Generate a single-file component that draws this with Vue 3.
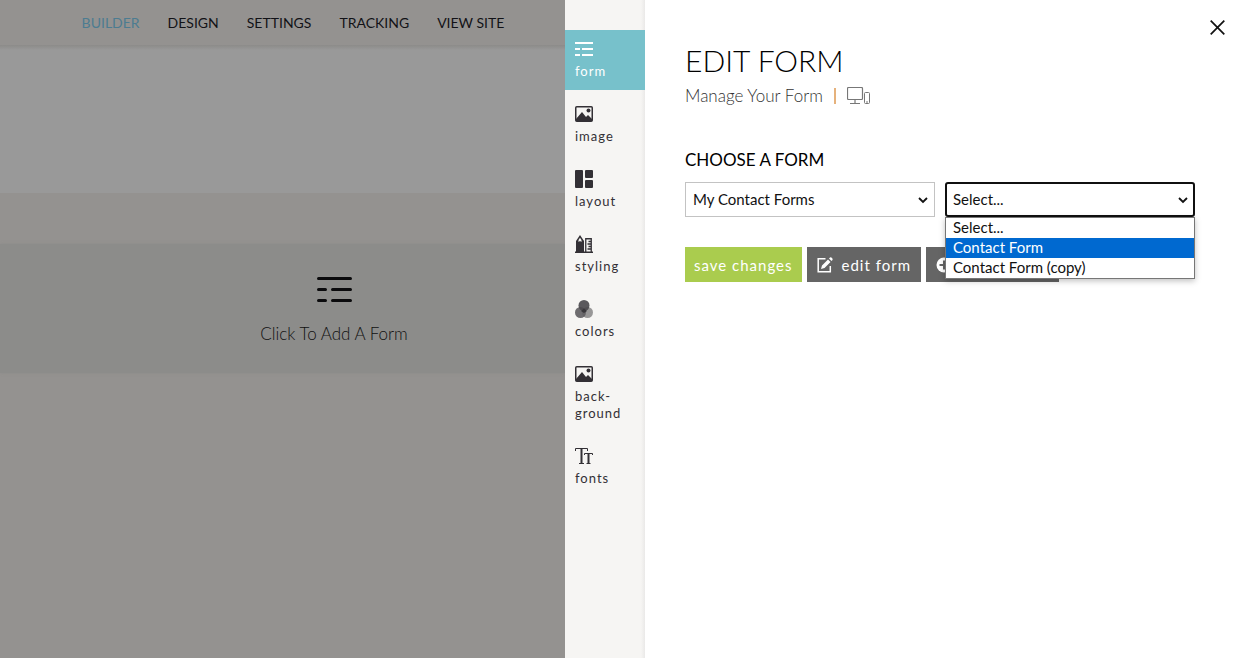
<script setup>
import { ref } from 'vue'

const navLinks = ['BUILDER', 'DESIGN', 'SETTINGS', 'TRACKING', 'VIEW SITE']
const tools = [
  { icon: 'form', lines: ['form'] },
  { icon: 'image', lines: ['image'] },
  { icon: 'layout', lines: ['layout'] },
  { icon: 'styling', lines: ['styling'] },
  { icon: 'colors', lines: ['colors'] },
  { icon: 'image', lines: ['back-', 'ground'] },
  { icon: 'fonts', lines: ['fonts'] }
]
const formOptions = ['Select...', 'Contact Form', 'Contact Form (copy)']

const activeTool = ref(0)
const group = ref('My Contact Forms')
const chosen = ref('Select...')
const highlighted = ref(1)
</script>

<template>
  <div class="app">
    <main class="stage">
      <nav class="topnav">
        <a v-for="(link, i) in navLinks" :key="link" href="#" :class="{ current: i === 0 }">{{ link }}</a>
      </nav>
      <div class="blank"></div>
      <div class="strip"></div>
      <button class="dropzone" type="button">
        <svg width="35" height="28" viewBox="0 0 35 28" fill="none" stroke="#0b0b0d" stroke-width="3" stroke-linecap="round">
          <path d="M1.500 3.500H33.500M1.500 14.500H8.500M15.500 14.500H33.500M1.500 25.500H8.500M15.500 25.500H33.500" />
        </svg>
        <span>Click To Add A Form</span>
      </button>
    </main>

    <aside class="rail">
      <button
        v-for="(tool, i) in tools"
        :key="i"
        type="button"
        class="tool"
        :class="{ active: i === activeTool }"
        @click="activeTool = i"
      >
        <svg v-if="tool.icon === 'form'" width="18" height="18" viewBox="0 0 18 18" fill="none" stroke="#fff" stroke-width="2">
          <path d="M0 3H18M0 9H5M7 9H18M0 15H5M7 15H18" />
        </svg>
        <svg v-else-if="tool.icon === 'image'" width="18" height="18" viewBox="0 0 18 18">
          <rect x=".75" y="1.750" width="16.500" height="14.500" rx="1" fill="none" stroke="#333035" stroke-width="1.500" />
          <path d="M1 14L7 7L11 12L13 10L17 14V16H1Z" fill="#333035" />
          <circle cx="13.500" cy="5.500" r="2" fill="#333035" />
        </svg>
        <svg v-else-if="tool.icon === 'layout'" width="18" height="18" viewBox="0 0 18 18" fill="#333035">
          <rect width="8" height="18" rx="1" />
          <rect x="10" width="8" height="8" rx="1" />
          <rect x="10" y="10" width="8" height="8" rx="1" />
        </svg>
        <svg v-else-if="tool.icon === 'styling'" width="18" height="18" viewBox="0 0 18 18" fill="#333035">
          <path d="M0 16.500H18V18H0ZM1 17V6L5 0L9 6V17Z" />
          <path d="M3.500 5L5 2.800L6.500 5V7L5 6L3.500 7Z" fill="#f6f5f3" />
          <path d="M10.750 17V3.750H16.250V17M13.500 6.500H16M12.500 9H16M13.500 11.500H16M12.500 14H16" fill="none" stroke="#333035" stroke-width="1.300" />
        </svg>
        <svg v-else-if="tool.icon === 'colors'" width="18" height="18" viewBox="0 0 18 18">
          <circle cx="12.500" cy="12.500" r="5.500" fill="#989797" />
          <circle cx="5.500" cy="12.500" r="5.500" fill="#5f5d60" fill-opacity=".9" />
          <circle cx="9" cy="5.500" r="5.500" fill="#49474b" fill-opacity=".9" />
          <path d="M9 8.500L12 11L9 13L6 11Z" fill="#39373b" />
        </svg>
        <svg v-else width="18" height="18" viewBox="0 0 18 18" fill="none" stroke="#333035">
          <path d="M.5 4V1.500H12.500V4M9.500 8V6.500H17.500V8" />
          <path d="M6.500 1.500V16M13.500 6.500V16" stroke-width="2" />
          <path d="M4 16.500H9M11.500 16.500H15.500" />
        </svg>
        <span v-for="line in tool.lines" :key="line" class="tool-line">{{ line }}</span>
      </button>
    </aside>

    <section class="panel">
      <button class="close" type="button" aria-label="Close">
        <svg width="15" height="15" viewBox="0 0 15 15" fill="none" stroke="#111" stroke-width="1.700">
          <path d="M.7 .7L14.300 14.300M14.300 .7L.7 14.300" />
        </svg>
      </button>

      <h1>EDIT FORM</h1>
      <div class="subtitle">
        <span>Manage Your Form</span>
        <span class="divider"></span>
        <svg width="24" height="18" viewBox="0 0 24 18" fill="none" stroke="#777">
          <rect x=".5" y=".5" width="15" height="12" rx="1" stroke-width="1.200" />
          <path d="M8 12.500V16M3 16.500H13" stroke-width="1.200" />
          <rect x="17.500" y="5.500" width="5" height="11" rx="1" />
          <path d="M19 15H21" />
        </svg>
      </div>

      <h2 id="choose">CHOOSE A FORM</h2>
      <div class="fields">
        <div class="field">
          <select v-model="group" aria-labelledby="choose">
            <option>My Contact Forms</option>
          </select>
          <svg class="chevron" width="10" height="7" viewBox="0 0 10 7" fill="none" stroke="#111" stroke-width="1.800">
            <path d="M1 1L5 5L9 1" />
          </svg>
        </div>
        <div class="field open">
          <select v-model="chosen" aria-labelledby="choose">
            <option v-for="o in formOptions" :key="o">{{ o }}</option>
          </select>
          <svg class="chevron" width="10" height="7" viewBox="0 0 10 7" fill="none" stroke="#111" stroke-width="1.800">
            <path d="M1 1L5 5L9 1" />
          </svg>
          <ul class="menu" role="listbox" aria-labelledby="choose">
            <li
              v-for="(o, i) in formOptions"
              :key="o"
              role="option"
              :aria-selected="i === highlighted"
              :class="{ highlighted: i === highlighted }"
              @mouseenter="highlighted = i"
              @click="chosen = o"
            >{{ o }}</li>
          </ul>
        </div>
      </div>

      <div class="actions">
        <button type="button" class="save">save changes</button>
        <button type="button" class="edit">
          <svg width="16" height="16" viewBox="0 0 16 16">
            <path d="M8.500 1.700H1.200V14.800H13.300V9" fill="none" stroke="#fff" stroke-width="1.500" />
            <path d="M4 12L5 8.500L11 2.500L13.500 5L7.500 11ZM12 1.500L13 .5Q14 0 15 1Q16 2 15.500 3L14.500 4Z" fill="#fff" />
          </svg>
          <span>edit form</span>
        </button>
        <button type="button" class="add" aria-label="add form">
          <svg width="16" height="16" viewBox="0 0 16 16">
            <circle cx="8" cy="8" r="7.500" fill="#fff" />
            <path d="M8 3.500V12.500M3.500 8H12.500" stroke="#656565" stroke-width="2" />
          </svg>
        </button>
      </div>
    </section>
  </div>
</template>

<style>
body {
  margin: 0;
}
</style>

<style scoped>
.app {
  display: flex;
  min-height: 100vh;
  font-family: Lato, "Open Sans", sans-serif;
  color: #111;
  background: #fff;
}
button,
select {
  font-family: inherit;
  color: inherit;
  border: 0;
  margin: 0;
}
svg {
  display: block;
  flex: none;
}

.stage {
  flex: 1;
  min-width: 0;
  background: #949290;
}
.topnav {
  display: flex;
  justify-content: center;
  gap: 28px;
  padding: 13px 0 12px;
  margin-left: 21px;
  font-size: 14px;
  line-height: 20px;
}
.topnav a {
  color: #121217;
  text-decoration: none;
  white-space: nowrap;
}
.topnav a.current {
  color: #4c7c91;
}
.blank {
  height: 148px;
  background: linear-gradient(#8c8b89, #999 5px);
}
.strip {
  height: 51px;
}
.dropzone {
  display: flex;
  flex-direction: column;
  align-items: center;
  gap: 19px;
  width: 100%;
  padding: 31px 0 27px 103px;
  background: #8c8c8a;
  box-shadow: 0 0 3px #8c8c8a;
  font-size: 17px;
  font-weight: 300;
  line-height: 24px;
}

.rail {
  flex: 0 0 80px;
  padding-top: 30px;
  box-sizing: border-box;
  background: linear-gradient(to right, #f6f5f3 76px, #eae9e8 80px);
}
.tool {
  display: flex;
  flex-direction: column;
  align-items: flex-start;
  width: 100%;
  padding: 10px;
  margin-bottom: 5px;
  background: transparent;
  font-size: 13px;
  line-height: 17px;
  letter-spacing: 1px;
  color: #333035;
}
.tool svg {
  margin-bottom: 5px;
}
.tool.active {
  background: #77c1cb;
  color: #fff;
}

.panel {
  position: relative;
  flex: 0 0 600px;
  box-sizing: border-box;
  padding: 40px 50px 40px 40px;
}
.close {
  position: absolute;
  top: 15px;
  right: 15px;
  padding: 5px;
  background: transparent;
}
h1 {
  margin: 0;
  font-size: 30px;
  font-weight: 300;
  line-height: 40px;
  color: #000;
}
.subtitle {
  display: flex;
  align-items: center;
  gap: 11px;
  margin-top: 4px;
  font-size: 17px;
  line-height: 24px;
  font-weight: 300;
  color: #333;
}
.divider {
  width: 2px;
  height: 16px;
  background: #e6b27c;
}
h2 {
  margin: 40px 0 10px;
  font-size: 17px;
  font-weight: 400;
  line-height: 24px;
  color: #000;
}
.fields {
  display: flex;
  gap: 10px;
}
.field {
  position: relative;
  flex: 1;
}
.field select {
  display: block;
  appearance: none;
  width: 100%;
  height: 35px;
  padding: 0 30px 1px 7px;
  border: 1px solid #c3c3c3;
  border-radius: 0;
  background: #fff;
  font-size: 15px;
}
.field.open select {
  padding-left: 6px;
  border: 2px solid #101010;
  border-radius: 3px;
}
.chevron {
  position: absolute;
  right: 7px;
  top: 15px;
  pointer-events: none;
}
.menu {
  position: absolute;
  z-index: 1;
  top: 100%;
  left: 0;
  right: 0;
  margin: 0;
  padding: 0;
  list-style: none;
  border: 1px solid #767676;
  background: #fff;
  box-shadow: 0 2px 6px rgba(0, 0, 0, 0.25);
  font-size: 15px;
  line-height: 18px;
}
.menu li {
  padding: 0 7px 2px;
}
.menu li.highlighted {
  background: #0069d0;
  color: #fff;
}
.actions {
  display: flex;
  gap: 5px;
  margin-top: 30px;
}
.actions button {
  display: flex;
  align-items: center;
  gap: 9px;
  height: 35px;
  padding: 0 10px;
  background: #656565;
  color: #fff;
  font-size: 15px;
  letter-spacing: 1px;
  white-space: nowrap;
}
.actions .save {
  padding: 0 9px;
  background: #aacc4e;
}
.actions .add {
  width: 133px;
}
</style>
